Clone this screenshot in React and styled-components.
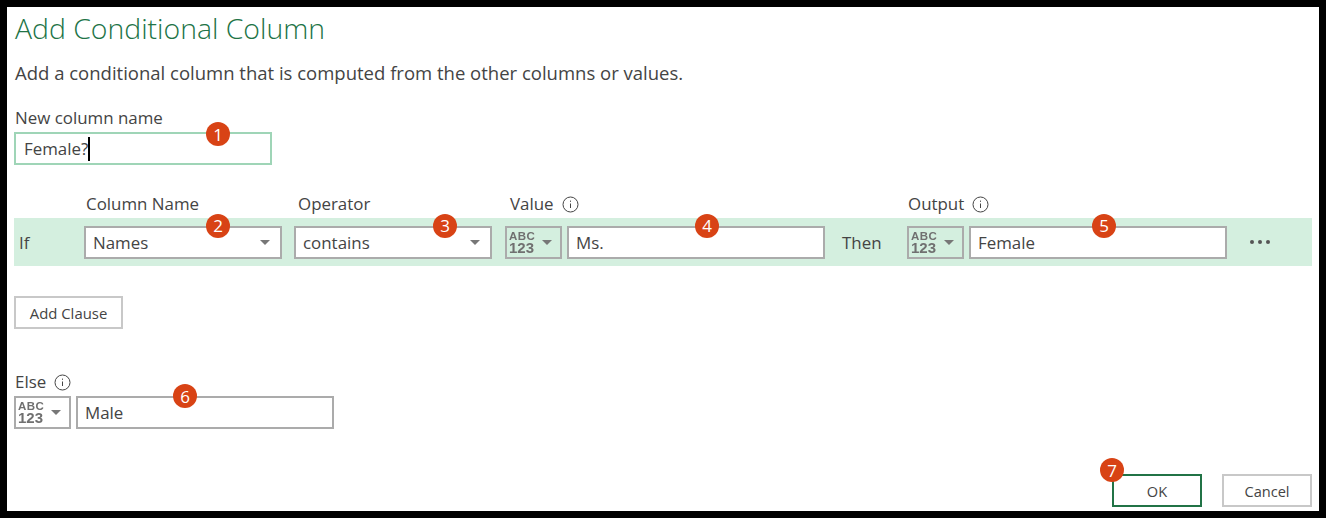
import styled, { createGlobalStyle } from "styled-components"

const GlobalStyle = createGlobalStyle`
html, body { margin: 0; padding: 0; background: #fff; }
body { font-family: "Open Sans", "Liberation Sans", sans-serif; color: #444; }
`

const Dialog = styled.div`
box-sizing: border-box;
width: 1326px;
height: 518px;
border: 7px solid #000;
padding: 0 7px;
display: flex;
flex-direction: column;
background: #fff;
overflow: hidden;
`
const Title = styled.h1`
margin: 2px 0 0 1px;
font-size: 28.4px;
line-height: 38px;
font-weight: 300;
color: #217346;
`
const Description = styled.p`
margin: 14px 0 0 1px;
font-size: 18.5px;
line-height: 24px;
`
const Label = styled.label`
display: flex;
align-items: center;
gap: 8px;
margin-left: ${props => props.$indent || 1}px;
font-size: 16.9px;
line-height: 22px;
`
const NameBlock = styled.div`
margin-top: 22px;
width: 258px;
display: flex;
flex-direction: column;
gap: 3px;
`
const ClauseGrid = styled.div`
display: grid;
grid-template-columns: 70px 198px 12px 198px 13px 57px 5px 258px 82px 57px 5px 258px 1fr;
`
const ClauseHeader = styled(ClauseGrid)`
box-sizing: border-box;
margin-top: 27px;
height: 26px;
padding-bottom: 2px;
align-items: center;
`
const HeaderCell = styled.div`
grid-column: ${props => props.$col};
`
const ClauseRow = styled(ClauseGrid)`
height: 48px;
align-items: center;
background: #d4efdf;
`
const IfLabel = styled.span`
margin-left: 5px;
font-size: 16.9px;
`
const ThenLabel = styled.span`
margin-left: 17px;
font-size: 16.9px;
`
const Field = styled.div`
position: relative;
box-sizing: border-box;
height: 33px;
display: flex;
align-items: center;
justify-content: space-between;
padding: 0 7px;
background: #fff;
border: 2px solid ${props => props.$accent ? "#9fd5b7" : "#ababab"};
font-size: 16.9px;
width: ${props => props.$width ? props.$width + "px" : "auto"};
`
const Caret = styled.span`
height: 24px;
border-left: 2px solid #000;
`
const NameValue = styled.span`
display: flex;
align-items: center;
margin-left: 1px;
`
const Arrow = styled.span`
width: 0;
height: 0;
border-left: 5px solid transparent;
border-right: 5px solid transparent;
border-top: 5px solid #777;
margin-right: ${props => props.$right || 3}px;
`
const TypeField = styled(Field)`
padding: 0 0 0 2px;
background: ${props => props.$onWhite ? "#fff" : "transparent"};
width: ${props => props.$onWhite ? "57px" : "auto"};
`
const TypeIcon = styled.svg`
display: block;
filter: blur(0.3px);
font-family: "Liberation Sans", sans-serif;
font-weight: 700;
fill: #707070;
`
const Dots = styled.div`
display: flex;
gap: 4px;
margin-left: 23px;
`
const Dot = styled.span`
width: 4px;
height: 4px;
border-radius: 50%;
background: #555;
`
const AddButton = styled.button`
box-sizing: border-box;
display: block;
margin-top: 30px;
width: 109px;
height: 33px;
padding: 0;
background: #fff;
border: 2px solid #c8c8c8;
color: #444;
font-family: inherit;
font-size: 14.9px;
`
const ElseBlock = styled.div`
margin-top: 42px;
display: flex;
flex-direction: column;
gap: 3px;
`
const ElseRow = styled.div`
display: flex;
gap: 5px;
height: 32px;
`
const Footer = styled.div`
margin-top: auto;
margin-bottom: 4px;
display: flex;
justify-content: flex-end;
gap: 20px;
`
const DialogButton = styled.button`
position: relative;
box-sizing: border-box;
width: 90px;
height: 33px;
padding: 0;
background: #fff;
border: 2px solid ${props => props.$primary ? "#217346" : "#c8c8c8"};
color: #444;
font-family: inherit;
font-size: 14.6px;
`
const Badge = styled.span`
position: absolute;
left: ${props => props.$left}px;
top: ${props => props.$top || -14}px;
width: 24px;
height: 24px;
border-radius: 50%;
background: #d84315;
color: #fff;
display: flex;
align-items: center;
justify-content: center;
font-family: "Open Sans", sans-serif;
font-size: 17px;
line-height: 1;
`

const InfoIcon = () => (
    <svg width="17" height="17" viewBox="0 0 17 17" fill="none" stroke="#444" strokeWidth="1">
        <circle cx="8.5" cy="8.5" r="7.5" />
        <path d="M8.5 7.5v4.5" />
        <path d="M8.5 4.6v1.2" />
    </svg>
)

const TypePicker = ({ onWhite }) => (
    <TypeField $onWhite={onWhite}>
        <TypeIcon width="26" height="25" viewBox="0 0 26 25">
            <text x="0" y="9.5" fontSize="11.5" letterSpacing="0.4">ABC</text>
            <text x="0" y="23" fontSize="15">123</text>
        </TypeIcon>
        <Arrow $right={8} />
    </TypeField>
)

const App = () => {
    return (
        <Dialog>
            <GlobalStyle />
            <Title>Add Conditional Column</Title>
            <Description>Add a conditional column that is computed from the other columns or values.</Description>

            <NameBlock>
                <Label>New column name</Label>
                <Field $accent>
                    <NameValue>Female?<Caret /></NameValue>
                    <Badge $left={190} $top={-12}>1</Badge>
                </Field>
            </NameBlock>

            <ClauseHeader>
                <HeaderCell $col="2"><Label $indent={2}>Column Name</Label></HeaderCell>
                <HeaderCell $col="4"><Label $indent={4}>Operator</Label></HeaderCell>
                <HeaderCell $col="6 / span 3"><Label $indent={5}>Value <InfoIcon /></Label></HeaderCell>
                <HeaderCell $col="10 / span 3"><Label $indent={1}>Output <InfoIcon /></Label></HeaderCell>
            </ClauseHeader>
            <ClauseRow>
                <IfLabel>If</IfLabel>
                <Field>
                    Names<Arrow />
                    <Badge $left={120}>2</Badge>
                </Field>
                <span />
                <Field>
                    contains<Arrow />
                    <Badge $left={137}>3</Badge>
                </Field>
                <span />
                <TypePicker />
                <span />
                <Field>
                    Ms.
                    <Badge $left={126}>4</Badge>
                </Field>
                <ThenLabel>Then</ThenLabel>
                <TypePicker />
                <span />
                <Field>
                    Female
                    <Badge $left={121}>5</Badge>
                </Field>
                <Dots><Dot /><Dot /><Dot /></Dots>
            </ClauseRow>

            <AddButton>Add Clause</AddButton>

            <ElseBlock>
                <Label>Else <InfoIcon /></Label>
                <ElseRow>
                    <TypePicker onWhite />
                    <Field $width={258}>
                        Male
                        <Badge $left={95}>6</Badge>
                    </Field>
                </ElseRow>
            </ElseBlock>

            <Footer>
                <DialogButton $primary>
                    OK
                    <Badge $left={-14} $top={-18}>7</Badge>
                </DialogButton>
                <DialogButton>Cancel</DialogButton>
            </Footer>
        </Dialog>
    )
}

export default App
